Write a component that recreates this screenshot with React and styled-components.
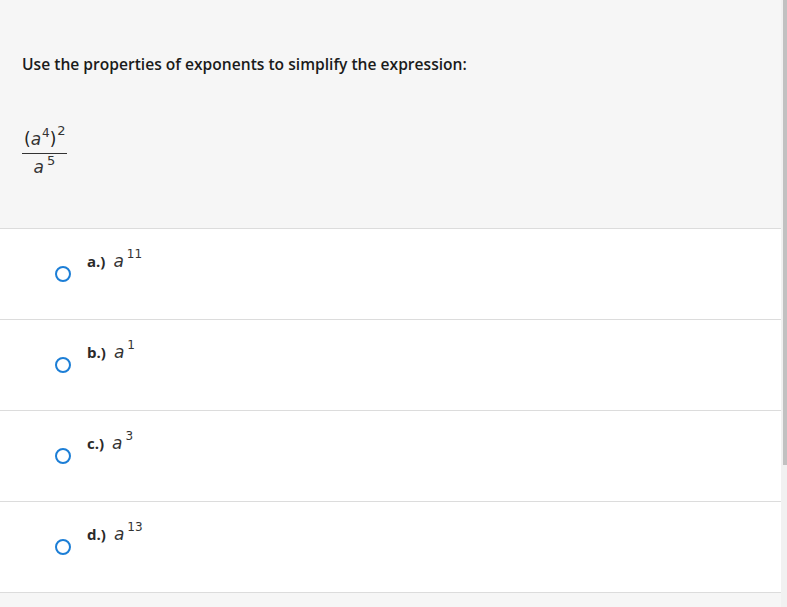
import React from 'react';
import styled, { createGlobalStyle } from 'styled-components';

const Global = createGlobalStyle`
  html, body { margin: 0; padding: 0; height: 100%; overflow: hidden; }
  body { background: #ffffff; font-family: "Open Sans", "Liberation Sans", sans-serif; }
`;

const Frame = styled.div`
  display: flex;
  height: 607px;
  overflow: hidden;
`;

const Page = styled.main`
  flex: 1;
  background: #f6f6f6;
`;

const Track = styled.div`
  width: 6px;
  background: #f1f1f1;
  display: flex;
  justify-content: flex-end;
`;

const Thumb = styled.div`
  width: 4px;
  height: 465px;
  background: #c1c1c1;
`;

const Prompt = styled.div`
  height: 228px;
  box-sizing: border-box;
  padding: 54px 22px 0;
  background: #f6f6f6;
`;

const Question = styled.p`
  margin: 0;
  font-size: 15.6px;
  font-weight: 600;
  color: #1b1b1b;
  line-height: 20px;
`;

const Fraction = styled.div`
  display: inline-flex;
  flex-direction: column;
  align-items: center;
  margin-top: 53px;
  font-family: "DejaVu Sans", sans-serif;
  color: #222;
`;

const Numer = styled.span`
  padding: 0 1px 2px 2px;
  border-bottom: 1px solid #333;
  font-size: 17px;
  line-height: 24px;
`;

const Denom = styled.span`
  padding-top: 1px;
  font-size: 17px;
  line-height: 24px;
`;

const Expr = styled.span`
  display: inline-block;
  line-height: 20px;
`;

const Var = styled.i`
  font-style: oblique;
  font-family: "DejaVu Sans", sans-serif;
  font-size: ${p => p.$size || 17}px;
  color: #333;
`;

const Sup = styled.sup`
  font-size: ${p => p.$size || 11}px;
  font-style: normal;
  font-family: "DejaVu Sans", sans-serif;
  vertical-align: ${p => p.$lift || 7}px;
  line-height: 0;
  margin-left: ${p => p.$gap || 1}px;
  color: #333;
`;

const Options = styled.ul`
  list-style: none;
  margin: 0;
  padding: 0;
  border-top: 1px solid #dcdcdc;
`;

const Row = styled.li`
  display: flex;
  align-items: flex-start;
  height: 90px;
  background: #ffffff;
  border-bottom: 1px solid #dcdcdc;
  padding-left: 55px;
`;

const Radio = styled.span`
  width: 12px;
  height: 12px;
  border: 2px solid #1c7ed6;
  border-radius: 50%;
  margin-top: 37px;
  flex-shrink: 0;
`;

const Choice = styled.div`
  display: flex;
  align-items: baseline;
  margin-left: 16px;
  margin-top: 22px;
`;

const Letter = styled.span`
  font-size: 15px;
  font-weight: 700;
  margin-right: 8px;
  color: #2a2a2a;
`;

const choices = [
  { key: 'a', exp: '11' },
  { key: 'b', exp: '1' },
  { key: 'c', exp: '3' },
  { key: 'd', exp: '13' },
];

export default function App() {
  return (
    <>
      <Global />
      <Frame>
        <Page>
          <Prompt>
            <Question>Use the properties of exponents to simplify the expression:</Question>
            <Fraction>
              <Numer>
                (<Var>a</Var><Sup $size={12} $lift={8}>4</Sup>)<Sup $lift={10} $size={13}>2</Sup>
              </Numer>
              <Denom>
                <Var>a</Var><Sup $gap={3} $size={13} $lift={8}>5</Sup>
              </Denom>
            </Fraction>
          </Prompt>
          <Options>
            {choices.map(c => (
              <Row key={c.key}>
                <Radio />
                <Choice>
                  <Letter>{c.key}.)</Letter>
                  <Expr>
                    <Var $size={17}>a</Var>
                    <Sup $size={12} $lift={9} $gap={3}>{c.exp}</Sup>
                  </Expr>
                </Choice>
              </Row>
            ))}
          </Options>
        </Page>
        <Track>
          <Thumb />
        </Track>
      </Frame>
    </>
  );
}
